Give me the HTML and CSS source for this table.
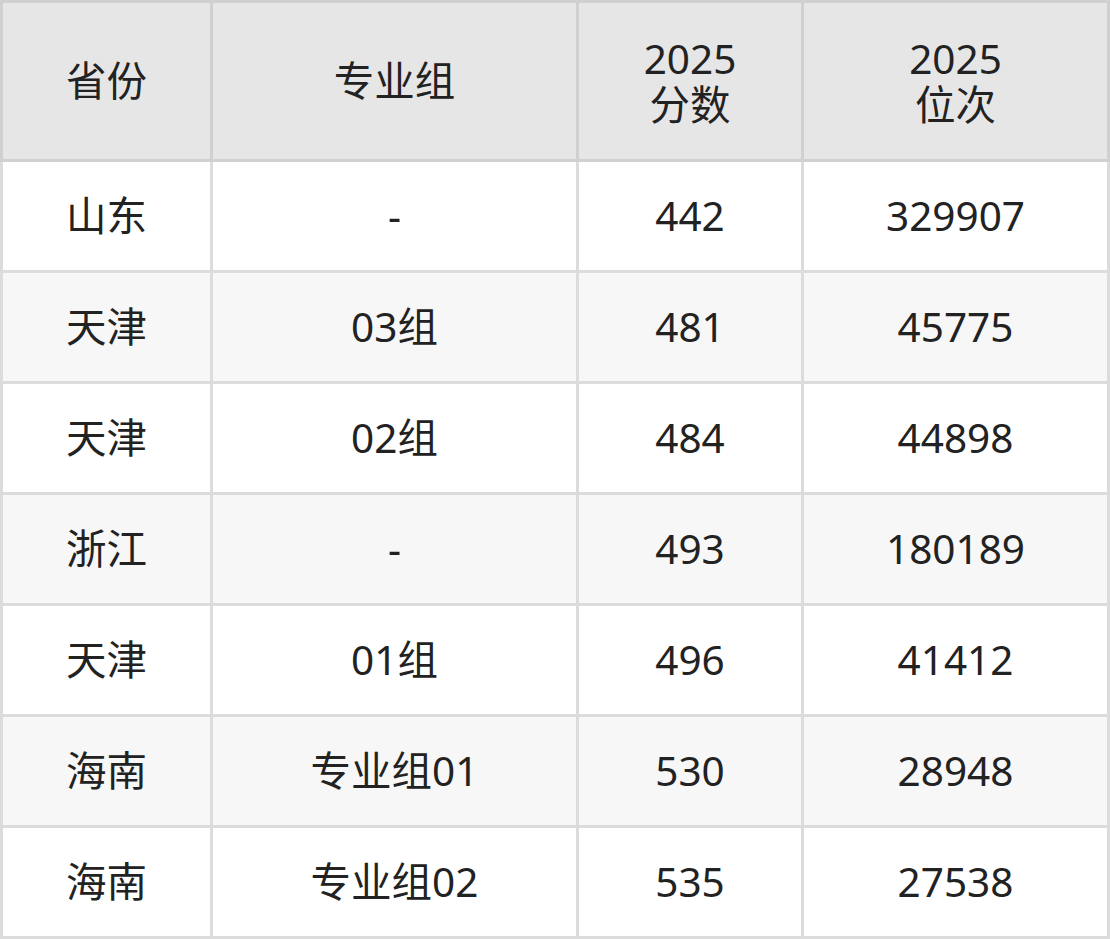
FILE: index.html
```html
<!DOCTYPE html>
<html lang="zh">
<head>
<meta charset="utf-8">
<link rel="stylesheet" href="styles.css">
</head>
<body>
<div class="table">
  <div class="head">
    <div class="cell">省份</div>
    <div class="cell">专业组</div>
    <div class="cell two"><span class="line">2025</span><span class="line">分数</span></div>
    <div class="cell two"><span class="line">2025</span><span class="line">位次</span></div>
  </div>
  <div class="body">
    <div class="cell">山东</div><div class="cell">-</div><div class="cell">442</div><div class="cell">329907</div>
    <div class="cell alt">天津</div><div class="cell alt">03组</div><div class="cell alt">481</div><div class="cell alt">45775</div>
    <div class="cell">天津</div><div class="cell">02组</div><div class="cell">484</div><div class="cell">44898</div>
    <div class="cell alt">浙江</div><div class="cell alt">-</div><div class="cell alt">493</div><div class="cell alt">180189</div>
    <div class="cell">天津</div><div class="cell">01组</div><div class="cell">496</div><div class="cell">41412</div>
    <div class="cell alt">海南</div><div class="cell alt">专业组01</div><div class="cell alt">530</div><div class="cell alt">28948</div>
    <div class="cell">海南</div><div class="cell">专业组02</div><div class="cell">535</div><div class="cell">27538</div>
  </div>
</div>
</body>
</html>
```
FILE: styles.css
```css
html, body {
  margin: 0;
  padding: 0;
  background: #ffffff;
}
.table {
  width: 1110px;
  font-family: "Noto Sans", "Noto Sans CJK SC", sans-serif;
  font-size: 40.5px;
  color: #222222;
}
.head, .body {
  display: grid;
  grid-template-columns: 207px 363px 222px 303px;
  column-gap: 3px;
  row-gap: 3px;
}
.head {
  background: #d0d0d0;
  padding: 3px;
  grid-template-rows: 156px;
}
.body {
  background: #dcdcdc;
  padding: 0 3px 3px 3px;
  grid-auto-rows: 108px;
}
.cell {
  display: flex;
  align-items: center;
  justify-content: center;
  text-align: center;
  background: #ffffff;
  line-height: 1.2;
}
.cell.two {
  flex-direction: column;
  padding-top: 2px;
}
.line {
  display: block;
  line-height: 46px;
  height: 46px;
}
.head .cell {
  background: #e6e6e6;
}
.cell.alt {
  background: #f7f7f7;
}
```
